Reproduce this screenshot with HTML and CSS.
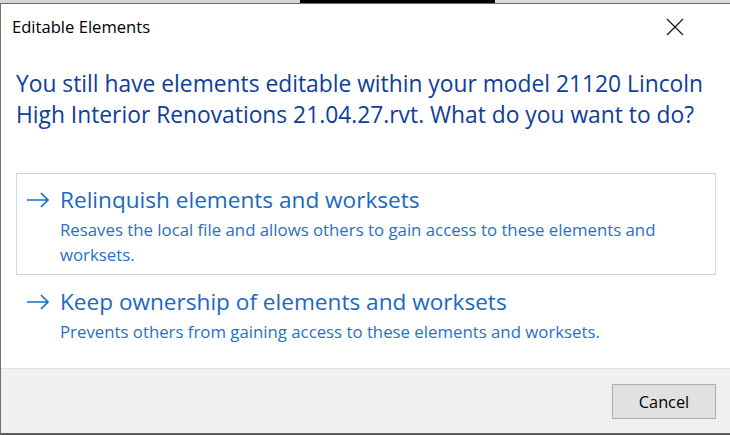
FILE: index.html
```html
<!DOCTYPE html>
<html>
<head>
<meta charset="utf-8">
<link rel="stylesheet" href="styles.css">
</head>
<body>
<div class="desk">
  <div class="seg seg-a"></div>
  <div class="seg seg-b"></div>
  <div class="seg seg-c"></div>
</div>
<div class="dialog">
  <div class="titlebar">
    <span class="title">Editable Elements</span>
    <svg class="close" width="18" height="18" viewBox="0 0 18 18"><path d="M1 1L17 17M17 1L1 17" stroke="#111" stroke-width="1.1" fill="none"/></svg>
  </div>
  <div class="content">
    <div class="instruction">You still have elements editable within your model 21120 Lincoln High Interior Renovations 21.04.27.rvt. What do you want to do?</div>
    <div class="links">
      <div class="link hover">
        <svg class="arrow" width="24" height="16" viewBox="0 0 24 16"><path d="M1 8H22M15 1L22 8L15 15" stroke="#1a6ec4" stroke-width="1.7" fill="none"/></svg>
        <div class="ltext">
          <div class="ltitle">Relinquish elements and worksets</div>
          <div class="ldesc">Resaves the local file and allows others to gain access to these elements and worksets.</div>
        </div>
      </div>
      <div class="link">
        <svg class="arrow" width="24" height="16" viewBox="0 0 24 16"><path d="M1 8H22M15 1L22 8L15 15" stroke="#1a6ec4" stroke-width="1.7" fill="none"/></svg>
        <div class="ltext">
          <div class="ltitle">Keep ownership of elements and worksets</div>
          <div class="ldesc">Prevents others from gaining access to these elements and worksets.</div>
        </div>
      </div>
    </div>
  </div>
  <div class="footer">
    <button class="btn">Cancel</button>
  </div>
</div>
</body>
</html>
```
FILE: styles.css
```css
html, body { margin: 0; padding: 0; }
body {
  width: 730px; height: 435px; overflow: hidden;
  background: #ffffff;
  font-family: "Open Sans", "Noto Sans", sans-serif;
}
.desk { display: flex; height: 3px; background: #d8d8d8; }
.seg-a { width: 300px; background: #d6d6d6; }
.seg-b { width: 195px; background: #000; }
.seg-c { flex: 1; background: #dcdcdc; }
.dialog {
  height: 429px;
  border-top: 1px solid #6a6a6a;
  border-left: 1px solid #707070;
  border-bottom: 2px solid #5e5e5e;
  display: flex; flex-direction: column;
  background: #fff;
}
.titlebar {
  height: 44px; flex: none;
  display: flex; align-items: center; justify-content: space-between;
  padding: 0 46px 0 11px;
}
.title { font-size: 16.6px; color: #000; padding-top: 1px; }
.close { display: block; margin-top: 2px; }
.content { flex: 1; padding: 20px 14px 0 15px; }
.instruction {
  font-size: 22.8px; line-height: 31px; color: #0e3e98;
}
.links { margin-top: 43px; }
.link {
  display: flex; align-items: flex-start;
  border: 1px solid transparent;
  padding: 12px 10px 7px 9px;
}
.link.hover { border-color: #c6dbe8; }
.arrow { flex: none; margin-top: 6px; margin-right: 10px; }
.ltitle { font-size: 22.6px; line-height: 28px; color: #1a68bf; }
.ldesc { font-size: 16.8px; line-height: 25px; color: #2a70c4; margin-top: 3px; }
.footer {
  height: 65px; flex: none;
  background: #f0f0f0;
  border-top: 1px solid #dfdfdf;
  display: flex; justify-content: flex-end; align-items: flex-start;
  padding: 15px 14px 0 0;
  box-sizing: border-box;
  margin-top: auto;
}
.btn {
  width: 104px; height: 35px;
  background: #e1e1e1; border: 1px solid #adadad;
  font-family: "Open Sans", "Noto Sans", sans-serif;
  font-size: 16.3px; color: #000; padding: 0;
}
```
